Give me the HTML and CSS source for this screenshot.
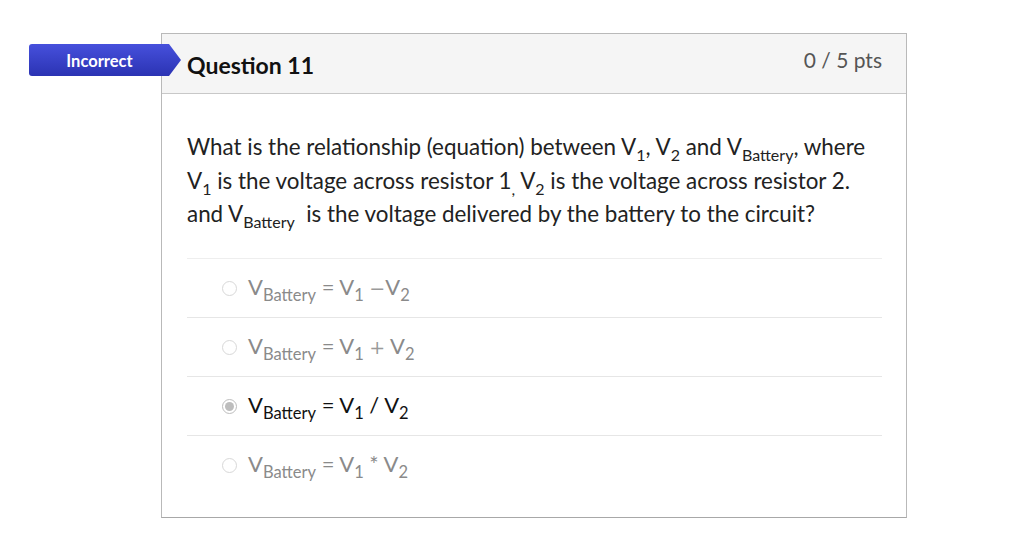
FILE: index.html
```html
<!DOCTYPE html>
<html>
<head>
<meta charset="utf-8">
<link rel="stylesheet" href="styles.css">
</head>
<body>
<div class="page">
  <div class="card">
    <div class="badge">
      <span class="badge-text">Incorrect</span>
      <svg class="badge-tip" width="15" height="32" viewBox="0 0 15 32"><defs><linearGradient id="g" x1="0" y1="0" x2="0" y2="1"><stop offset="0" stop-color="#4650dc"/><stop offset="1" stop-color="#2b33b3"/></linearGradient></defs><path d="M0 0 L2 0 L14 16 L2 32 L0 32 Z" fill="url(#g)"/></svg>
    </div>
    <div class="header">
      <div class="title">Question 11</div>
      <div class="pts">0 / 5 pts</div>
    </div>
    <div class="body">
      <p class="question">What is the relationship (equation) between V<sub>1</sub>, V<sub>2</sub> and V<sub>Battery</sub>, where<br>V<sub>1</sub> is the voltage across resistor 1<sub>,</sub> V<sub>2</sub> is the voltage across resistor 2.<br>and V<sub>Battery</sub>&nbsp; is the voltage delivered by the battery to the circuit?</p>
      <div class="answers">
        <div class="answer">
          <span class="radio"></span>
          <span class="atext">V<sub>Battery</sub> = V<sub>1</sub> <span class="op">&minus;</span>V<sub>2</sub></span>
        </div>
        <div class="answer">
          <span class="radio"></span>
          <span class="atext">V<sub>Battery</sub> = V<sub>1</sub> <span class="op">+</span> V<sub>2</sub></span>
        </div>
        <div class="answer selected">
          <span class="radio checked"></span>
          <span class="atext">V<sub>Battery</sub> = V<sub>1</sub> / V<sub>2</sub></span>
        </div>
        <div class="answer">
          <span class="radio"></span>
          <span class="atext">V<sub>Battery</sub> = V<sub>1</sub> * V<sub>2</sub></span>
        </div>
      </div>
    </div>
  </div>
</div>
</body>
</html>
```
FILE: styles.css
```css
* { box-sizing: border-box; }
html, body { margin: 0; padding: 0; background: #fff; }
body { font-family: Lato, "Noto Sans", sans-serif; color: #222; width: 1024px; height: 542px; overflow: hidden; }
.page { padding: 33px 0 0 161px; }
.card {
  position: relative;
  width: 746px;
  height: 485px;
  border: 1px solid #b9b9b9;
  border-bottom-color: #a8a8a8;
}
.badge {
  position: absolute;
  left: -133px;
  top: 10px;
  height: 32px;
  display: flex;
}
.badge-text {
  width: 138px;
  height: 32px;
  background: linear-gradient(#4650dc, #2b33b3);
  border-radius: 3px 0 0 3px;
  color: #fff;
  font-size: 16.5px;
  font-weight: bold;
  display: flex;
  align-items: center;
  justify-content: center;
  padding-left: 3px;
  padding-top: 1px;
}
.badge-tip { display: block; }
.header {
  height: 60px;
  background: #f5f5f5;
  border-bottom: 1px solid #c8c8c8;
  display: flex;
  justify-content: space-between;
  padding: 0 24px 0 25px;
}
.title { font-size: 23px; font-weight: bold; color: #111; padding-top: 17px; line-height: 28px; }
.pts { font-size: 21px; color: #555; padding-top: 13px; line-height: 26px; }
.body { padding: 0 24px 0 25px; }
.question {
  margin: 0;
  padding-top: 36px;
  font-size: 22.4px;
  line-height: 33.5px;
  color: #222;
}
sub { font-size: 16px; vertical-align: -6px; line-height: 0; }
.answers { margin-top: 27px; }
.answer {
  height: 59px;
  border-top: 1px solid #e6e6e6;
  display: flex;
  align-items: center;
  padding-left: 35px;
  color: #8a8a8a;
  font-size: 22px;
}
.answer.selected { color: #111; }
.answer:first-child { border-top-color: #eee; }
.radio {
  width: 15px;
  height: 15px;
  border: 1px solid #d8d8d8;
  border-radius: 50%;
  margin-right: 11px;
  margin-top: 2px;
  background: #fff;
  flex: none;
  position: relative;
}
.radio.checked { border-color: #bdbdbd; }
.radio.checked::after {
  content: "";
  position: absolute;
  left: 2px; top: 2px;
  width: 9px; height: 9px;
  border-radius: 50%;
  background: #bdbdbd;
}
.atext { margin-top: -2px; }
.atext sub { font-size: 16.5px; vertical-align: -6px; }
.op { font-family: "DejaVu Serif", serif; font-size: 19px; color: #9a9a9a; }
```
